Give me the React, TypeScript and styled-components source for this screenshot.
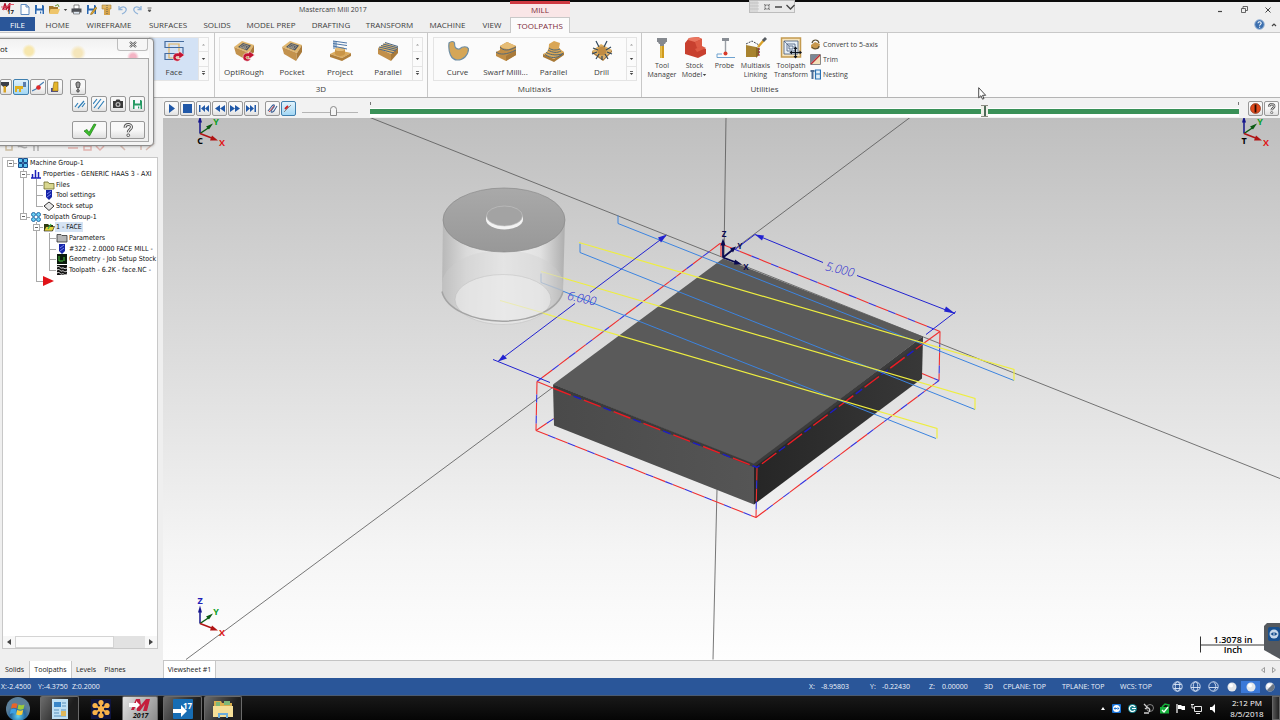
import React from "react";
import styled, { createGlobalStyle, ThemeProvider, css } from "styled-components";

const theme = {
  chrome: "#efefef",
  ribbon: "#fbfbfb",
  line: "#c8c8c8",
  blue: "#2a5699",
  text: "#3c3c3c",
  green: "#3a9158",
};

const GlobalStyle = createGlobalStyle`
  * { box-sizing: border-box; }
  html, body, #root { height: 100%; }
  body {
    margin: 0;
    overflow: hidden;
    font-family: "Open Sans", "Noto Sans", sans-serif;
    font-size: 8px;
    line-height: 10px;
    color: #3c3c3c;
  }
  button, input {
    font: inherit;
    color: inherit;
    margin: 0;
    padding: 0;
    border: 0;
    background: none;
  }
  svg { display: block; flex: none; }
`;

const Window = styled.div`
  position: relative;
  display: flex;
  flex-direction: column;
  height: 100vh;
  background: ${(p) => p.theme.chrome};
`;

/* ---------- title bar ---------- */

const TitleBar = styled.header`
  display: flex;
  height: 17px;
  flex: none;
  border-top: 2px solid #0c0c0c;
`;

const QuickAccess = styled.div`
  display: flex;
  align-items: center;
  width: 299px;
`;

const QuickButton = styled.button<{ $width?: number }>`
  display: flex;
  align-items: center;
  justify-content: center;
  width: ${(p) => p.$width ?? 14}px;
  height: 14px;
`;

const Title = styled.h1`
  margin: 0;
  width: 211px;
  font-size: 7px;
  font-weight: 400;
  line-height: 15px;
`;

const ContextTab = styled.div`
  width: 60px;
  margin-top: -1px;
  border-top: 3px solid #cf3840;
  background: #f9e6e7;
  color: #7d2a3a;
  line-height: 12px;
  text-align: center;
`;

const WindowButtons = styled.div`
  display: flex;
  align-items: center;
  gap: 12px;
  margin-left: auto;
  padding-right: 6px;
`;

const TabRow = styled.nav`
  display: flex;
  height: 15px;
  flex: none;
`;

const Tab = styled.button<{ $width: number; $kind?: "file" | "active" }>`
  width: ${(p) => p.$width}px;
  line-height: 15px;
  text-align: center;
  ${(p) =>
    p.$kind === "file" &&
    css`
      height: 14px;
      margin-right: 2px;
      background: ${p.theme.blue};
      color: #fff;
    `}
  ${(p) =>
    p.$kind === "active" &&
    css`
      height: 16px;
      border: 1px solid ${p.theme.line};
      border-bottom: 0;
      background: ${p.theme.ribbon};
      color: #7d2a3a;
      line-height: 13px;
      z-index: 1;
    `}
`;

const HelpCorner = styled.div`
  display: flex;
  align-items: center;
  gap: 6px;
  margin-left: auto;
  padding-right: 3px;
`;

/* ---------- ribbon ---------- */

const Ribbon = styled.section`
  display: flex;
  height: 66px;
  flex: none;
  border-top: 1px solid ${(p) => p.theme.line};
  border-bottom: 1px solid #b4b4b4;
  background: ${(p) => p.theme.ribbon};
`;

const Group = styled.div<{ $width: number }>`
  display: flex;
  flex-direction: column;
  align-items: center;
  justify-content: space-between;
  width: ${(p) => p.$width}px;
  padding: 4px 0 3px;
  border-right: 1px solid ${(p) => p.theme.line};
`;

const GroupLabel = styled.div`
  line-height: 10px;
`;

const Gallery = styled.div<{ $end?: boolean }>`
  display: flex;
  height: 44px;
  border: 1px solid #e4e4e4;
  margin-right: ${(p) => (p.$end ? 5 : 0)}px;
  align-self: ${(p) => (p.$end ? "flex-end" : "center")};
`;

const GalleryButton = styled.button<{ $selected?: boolean }>`
  display: flex;
  flex-direction: column;
  align-items: center;
  justify-content: space-between;
  width: 48px;
  padding: 2px 0 3px;
  white-space: nowrap;
  background: ${(p) => (p.$selected ? "#d3e2f5" : "transparent")};
`;

const Scroller = styled.div`
  display: flex;
  flex-direction: column;
  width: 10px;
  border-left: 1px solid #e4e4e4;
`;

const ScrollButton = styled.button`
  display: flex;
  flex: 1;
  align-items: center;
  justify-content: center;
  & + & { border-top: 1px solid #e4e4e4; }
`;

const Tools = styled.div`
  display: flex;
  align-items: flex-start;
  width: 100%;
  padding-left: 3px;
`;

const ToolButton = styled.button<{ $width: number }>`
  display: flex;
  flex-direction: column;
  align-items: center;
  gap: 2px;
  width: ${(p) => p.$width}px;
  font-size: 7px;
  line-height: 9px;
  white-space: nowrap;
`;

const ToolText = styled.span`
  display: flex;
  flex-direction: column;
  align-items: center;
`;

const MenuText = styled.span`
  display: flex;
  align-items: center;
`;

const SmallTools = styled.div`
  display: flex;
  flex-direction: column;
`;

const SmallTool = styled.button`
  display: flex;
  align-items: center;
  gap: 2px;
  height: 15px;
  font-size: 7px;
  white-space: nowrap;
`;

/* ---------- work area ---------- */

const Work = styled.main`
  display: flex;
  flex: 1;
  min-height: 0;
`;

const SidePanel = styled.aside`
  display: flex;
  flex-direction: column;
  width: 163px;
  flex: none;
`;

const PanelTools = styled.div`
  display: flex;
  align-items: flex-end;
  height: 59px;
  padding: 0 4px 5px;
  opacity: 0.6;
`;

const TreeBox = styled.div`
  display: flex;
  flex: 1;
  flex-direction: column;
  justify-content: space-between;
  margin: 0 5px 12px 2px;
  border: 1px solid ${(p) => p.theme.line};
  background: #fff;
  overflow: hidden;
`;

const Tree = styled.ul`
  display: grid;
  grid-auto-rows: 1fr;
  height: 128px;
  margin: 0;
  padding: 0 0 0 1px;
  list-style: none;
  font-family: "DejaVu Sans Condensed", "DejaVu Sans", sans-serif;
  font-size: 7px;
  color: #111;
`;

const TreeRow = styled.li`
  display: flex;
  align-items: center;
  white-space: nowrap;
`;

const TreeLabel = styled.span<{ $selected?: boolean }>`
  padding: 0 1px;
  line-height: 10px;
  background: ${(p) => (p.$selected ? "#d5e3f3" : "transparent")};
`;

const Guide = styled.span<{ $kind: string }>`
  position: relative;
  align-self: stretch;
  width: 13px;
  flex: none;
  &::before {
    content: "";
    position: absolute;
    left: 6px;
    top: 0;
    bottom: ${(p) => (p.$kind === "elbow" || p.$kind === "last" ? "50%" : "0")};
    border-left: ${(p) =>
      p.$kind === "blank" || p.$kind === "root" ? "0" : "1px solid #a9a9a9"};
  }
  &::after {
    content: "";
    position: absolute;
    left: 6px;
    right: 0;
    top: 50%;
    border-top: ${(p) =>
      p.$kind === "blank" || p.$kind === "line" ? "0" : "1px solid #a9a9a9"};
  }
`;

const Expander = styled.button`
  position: absolute;
  z-index: 1;
  left: 3px;
  top: 2px;
  width: 7px;
  height: 7px;
  border: 1px solid #aaa;
  background: linear-gradient(#666, #666) center / 3px 1px no-repeat #fff;
`;

const ScrollBar = styled.div`
  display: flex;
  height: 12px;
  background: #e2e2e2;
`;

const ScrollArrow = styled.button`
  display: flex;
  align-items: center;
  justify-content: center;
  width: 12px;
  background: #f7f7f7;
`;

const ScrollThumb = styled.div`
  width: 64%;
  margin-right: auto;
  border: 1px solid #d4d4d4;
  background: #fcfcfc;
`;

const BottomTabs = styled.nav`
  display: flex;
  height: 17px;
  flex: none;
  background: ${(p) => p.theme.chrome};
`;

const BottomTab = styled.button<{ $width: number; $active?: boolean }>`
  width: ${(p) => p.$width}px;
  font-size: 7px;
  line-height: 17px;
  color: #222;
  ${(p) =>
    p.$active &&
    css`
      border: 1px solid ${p.theme.line};
      border-width: 0 1px;
      background: #fff;
    `}
`;

const Stage = styled.section`
  display: flex;
  flex: 1;
  flex-direction: column;
  min-width: 0;
`;

const Viewport = styled.div`
  position: relative;
  flex: 1;
  min-height: 0;
  background: linear-gradient(#bfbfbf 0%, #d2d2d2 28%, #e4e4e4 55%, #f5f5f5 80%, #fefefe 100%);
  border-bottom: 1px solid #c4c4c4;
`;

const SheetArrows = styled.div`
  display: flex;
  align-items: center;
  gap: 7px;
  margin-left: auto;
  padding-right: 4px;
`;

const RemoteTab = styled.button`
  position: absolute;
  right: 0;
  bottom: 1px;
`;

/* ---------- playback ---------- */

const Playback = styled.div`
  display: flex;
  align-items: center;
  height: 20px;
  flex: none;
  padding: 0 1px;
  background: #f2f2f2;
`;

const PlayGroup = styled.div<{ $gap: number }>`
  display: flex;
  gap: 1px;
  margin-right: ${(p) => p.$gap}px;
`;

const PushButton = styled.button<{ $width?: number; $height?: number; $on?: boolean }>`
  display: flex;
  align-items: center;
  justify-content: center;
  width: ${(p) => p.$width ?? 15}px;
  height: ${(p) => p.$height ?? 15}px;
  border: 1px solid ${(p) => (p.$on ? "#3f7fae" : "#989898")};
  border-radius: 2px;
  background: ${(p) =>
    p.$on
      ? "linear-gradient(#e0f2fc, #a3d7f4)"
      : "linear-gradient(#f8f8f8 50%, #e0e0e0)"};
`;

const SpeedSlider = styled.input`
  appearance: none;
  width: 56px;
  height: 14px;
  margin-right: 12px;
  background: linear-gradient(#b5b5b5, #b5b5b5) 0 11px / 100% 1px no-repeat;
  &::-webkit-slider-thumb {
    appearance: none;
    width: 7px;
    height: 10px;
    margin-top: 6px;
    border: 1px solid #888;
    border-radius: 4px 4px 0 0;
    background: #f5f5f5;
  }
`;

const Timeline = styled.input`
  appearance: none;
  flex: 1;
  min-width: 0;
  height: 18px;
  margin-right: 9px;
  background:
    linear-gradient(#777, #777) 0 3px / 1px 3px no-repeat,
    linear-gradient(#777, #777) 100% 3px / 1px 3px no-repeat,
    linear-gradient(${(p) => p.theme.green}, ${(p) => p.theme.green}) 0 10px / 100% 5px no-repeat,
    linear-gradient(#fff, #fff) 0 9px / 100% 9px no-repeat;
  &::-webkit-slider-thumb {
    appearance: none;
    width: 7px;
    height: 12px;
    margin-top: 5px;
    border: 1px solid #8a8a80;
    border-width: 1px 0;
    background:
      linear-gradient(#4f6a58, #4f6a58) center / 2px 100% no-repeat,
      #f0f0e8;
  }
`;

/* ---------- dialog ---------- */

const Dialog = styled.div`
  position: absolute;
  z-index: 3;
  left: -6px;
  top: 38px;
  width: 160px;
  height: 108px;
  padding: 0 4px 4px 5px;
  border: 1px solid #8d8d8d;
  border-radius: 4px;
  background: #f4f4f4;
  box-shadow: 0 0 3px rgba(0, 0, 0, 0.4);
`;

const DialogTitle = styled.div`
  display: flex;
  justify-content: space-between;
  height: 19px;
  padding-right: 1px;
  line-height: 19px;
  color: #111;
  background:
    radial-gradient(circle at 29px 12px, #f7e7ae 0 4px, transparent 7px),
    radial-gradient(circle at 78px 14px, #f5e6bb 0 4px, transparent 8px),
    radial-gradient(circle at 133px 18px, #f4b4c4 0 3px, transparent 6px),
    linear-gradient(#f1f1f1, #fdfdfd);
`;

const CloseButton = styled.button`
  display: flex;
  align-items: center;
  justify-content: center;
  width: 31px;
  height: 12px;
  border: 1px solid #bdbdbd;
  border-top: 0;
  border-radius: 0 0 3px 3px;
  background: #f6f6f6;
`;

const DialogBody = styled.div`
  display: flex;
  flex-direction: column;
  height: 84px;
  border: 1px solid #a9a9a9;
  border-left: 0;
  background: #f0f0f0;
`;

const DialogRow = styled.div<{ $top: number; $gap: number; $right?: number }>`
  display: flex;
  gap: ${(p) => p.$gap}px;
  margin-top: ${(p) => p.$top}px;
  padding-right: ${(p) => p.$right ?? 0}px;
  justify-content: ${(p) => (p.$right ? "flex-end" : "flex-start")};
`;

const Spacer = styled.span`
  width: 5px;
`;

/* ---------- status + taskbar ---------- */

const StatusBar = styled.footer`
  display: flex;
  height: 17px;
  flex: none;
  align-items: center;
  justify-content: space-between;
  padding: 0 1px;
  background: ${(p) => p.theme.blue};
  color: #eef3fb;
  font-size: 7px;
  white-space: pre;
`;

const StatusGroup = styled.div`
  display: flex;
  align-items: center;
  height: 100%;
`;

const StatusCell = styled.span<{ $width: number }>`
  width: ${(p) => p.$width}px;
`;

const ShadeButton = styled.button<{ $on?: boolean; $narrow?: boolean }>`
  display: flex;
  align-items: center;
  justify-content: center;
  width: ${(p) => (p.$narrow ? 18 : 19)}px;
  height: 12px;
  background: ${(p) => (p.$on ? "#3a78d8" : "transparent")};
`;

const Taskbar = styled.footer`
  display: flex;
  height: 25px;
  flex: none;
  border-top: 1px solid #4a5a70;
  background: linear-gradient(#191919, #050505);
  color: #fff;
`;

const StartButton = styled.button`
  width: 36px;
  margin-right: 4px;
  padding-left: 5px;
`;

const TaskButton = styled.button<{ $width: number; $look?: "plain" | "active"; $gap?: number }>`
  display: flex;
  align-items: center;
  justify-content: center;
  width: ${(p) => p.$width}px;
  margin-right: ${(p) => p.$gap ?? 1}px;
  border: 1px solid ${(p) => (p.$look === "plain" ? "transparent" : "#6a6a6a")};
  border-bottom: 0;
  border-radius: 2px 2px 0 0;
  background: ${(p) =>
    p.$look === "plain"
      ? "transparent"
      : p.$look === "active"
        ? "linear-gradient(120deg, #e2e2e2, #8b8b8b)"
        : "linear-gradient(120deg, #6c6c6c, #1e1e1e 70%)"};
`;

const Tray = styled.div`
  display: flex;
  align-items: center;
  gap: 5px;
  margin-left: auto;
`;

const Clock = styled.div`
  width: 44px;
  padding-left: 4px;
  line-height: 11px;
  text-align: center;
`;

const ShowDesktop = styled.button`
  width: 8px;
  height: 100%;
  border: 1px solid #666;
  background: linear-gradient(90deg, #555, #222);
`;

const FloatBar = styled.div`
  position: absolute;
  z-index: 4;
  left: 749px;
  top: 0;
  display: flex;
  align-items: center;
  gap: 4px;
  width: 46px;
  height: 13px;
  border: 1px solid #bdbdbd;
  background: #e9e9e9;
`;

const Pointer = styled.svg`
  position: absolute;
  z-index: 5;
  left: 978px;
  top: 87px;
`;

/* ---------- small glyphs ---------- */

const Caret = ({ up, bar, light }: { up?: boolean; bar?: boolean; light?: boolean }) => (
  <svg width="5" height="5" viewBox="0 0 5 5">
    {bar && <path d="M1 .5h3" stroke="#444" strokeWidth=".8" />}
    <path d={up ? "M1 3.5L2.5 2 4 3.5z" : "M.8 2L2.5 4 4.2 2z"} fill={light ? "#999" : "#444"} />
  </svg>
);

const AppLogo = () => (
  <svg width="16" height="13" viewBox="0 0 16 13">
    <path d="M2 7L4 1.500l1.500 4 3-4L8 7" fill="none" stroke="#b3122c" strokeWidth="2" />
    <path d="M0 4h6l3-2.500h4M1 6.500h4" stroke="#e3566b" strokeWidth="1" fill="none" />
    <text x="6" y="11" fontSize="6" fontWeight="700" fill="#111">17</text>
  </svg>
);

const NewIcon = () => (
  <svg width="10" height="11" viewBox="0 0 10 11">
    <path d="M1 .5h5L9 3v7.500H1z" fill="#fdfdfd" stroke="#5c88bd" />
    <path d="M6 .5V3h3" fill="none" stroke="#5c88bd" />
  </svg>
);

const SaveIcon = ({ edit, color = "#2b67b0" }: { edit?: boolean; color?: string }) => (
  <svg width="11" height="11" viewBox="0 0 11 11">
    <path d="M1 1h8l1 1v8H1z" fill={color} />
    <path d="M3 1h5v3.500H3zM2.500 6.500h6V10h-6z" fill="#f3f7fb" />
    <path d="M6 7.500h1.200V9.500H6z" fill={color} />
    {edit && <path d="M5 9l4.500-6 1.500 1-4.500 6-2 .7z" fill="#e3a82c" stroke="#7a5a1a" strokeWidth=".5" />}
  </svg>
);

const OpenIcon = () => (
  <svg width="12" height="11" viewBox="0 0 12 11">
    <path d="M1 2h4l1 1h4v6H1z" fill="#a57a2b" />
    <path d="M2.500 5H12l-2 5H1z" fill="#eec56b" />
    <path d="M7 2l3-1.500 1 2.500" fill="none" stroke="#6c9a3a" />
  </svg>
);

const PrintIcon = () => (
  <svg width="11" height="11" viewBox="0 0 11 11">
    <path d="M3 1h5v4H3z" fill="#fff" stroke="#555" strokeWidth=".7" />
    <path d="M.5 4.500h10V8.500H.5z" fill="#4c4f55" />
    <path d="M2.500 7.500h6v2.500h-6z" fill="#dfe8f2" stroke="#555" strokeWidth=".6" />
  </svg>
);

const ZipIcon = () => (
  <svg width="11" height="12" viewBox="0 0 11 12">
    <path d="M1 1h9v4H1z" fill="#e2b765" stroke="#a57f38" strokeWidth=".6" />
    <path d="M3 4h6v7H3z" fill="#d6a44d" />
    <path d="M6 1v10" stroke="#69604d" strokeDasharray="1 1" />
  </svg>
);

const TurnIcon = ({ redo }: { redo?: boolean }) => (
  <svg width="10" height="10" viewBox="0 0 10 10">
    <g transform={redo ? "translate(10 0) scale(-1 1)" : undefined} fill="none" stroke="#8fb2d8" strokeWidth="1.300">
      <path d="M1 1v3.500h3.500M1.300 4C3 1.500 7.500 1 8.200 4 8.600 6 6 8 4 9" />
    </g>
  </svg>
);

const QuickCaret = () => (
  <svg width="5" height="6" viewBox="0 0 5 6">
    <path d="M.5 1h4M1 3l1.500 2L4 3z" stroke="#555" fill="#555" strokeWidth=".8" />
  </svg>
);

/* ---------- ribbon icons ---------- */

const RedBadge = () => (
  <g>
    <path
      d="M10 17.500c0-3 1.500-4.500 4.500-4.500h1.500v-2l5.500 4-5.500 4v-2.500h-1.500c-1.500 0-1.800.5-1.500 1.500.5 1 2.500 1.500 5 .5-1 2.500-3 3-5 2.500-2-.5-3-1.500-3-3.500z"
      fill="#c31432"
      stroke="#fff"
      strokeWidth=".5"
    />
  </g>
);

const Slab = () => (
  <g>
    <path d="M1 8l7-5 13 4-7 7z" fill="#e0b468" />
    <path d="M1 8l13 6v7L1 14z" fill="#c28f49" />
    <path d="M14 14l7-7v6l-7 8z" fill="#a97a3a" />
  </g>
);

const RibbonIcon = ({ kind }: { kind: string }) => (
  <svg width="22" height="22" viewBox="0 0 22 22">
    {kind === "face" && (
      <>
        <path d="M6 4h10v14H6z" fill="none" stroke="#e4b45e" strokeWidth="1.200" />
        <path d="M21 1.500H2v6h18v6H2v6h10" fill="none" stroke="#456c9e" strokeWidth="1.200" />
        <RedBadge />
      </>
    )}
    {(kind === "optirough" || kind === "pocket") && (
      <>
        <path d="M1 7l8-6 12 4-5 8z" fill="#e0b76f" />
        <path d="M1 7l15 6-1 8L3 14z" fill="#c3924d" />
        <path d="M16 13l5-8v7l-6 9z" fill="#a97a3a" />
        <path d="M5 7l5-4 8 2.500-4 5z" fill="#4d5560" />
        <path d="M7 7l3.500-2.500 5 1.500-2.500 3zM9.500 7l1.500-1 2 .8-1 1.200z" fill="none" stroke="#b7ae9a" strokeWidth=".7" />
        {kind === "optirough" && <RedBadge />}
      </>
    )}
    {kind === "project" && (
      <>
        <path d="M1 14l8-4 13 3-9 5z" fill="#dbab5c" />
        <path d="M1 14l12 4v3L1 17zM13 18l9-5v3l-9 5z" fill="#b07f3b" />
        <path d="M6 9v5c2 2.500 8 2.500 10 0V9z" fill="#c99548" />
        <ellipse cx="11" cy="9" rx="5" ry="2" fill="#e4bc77" />
        <path d="M4 1l14 2M4 3.500l14 2M4 6l14 3M5 1v8M7 1v7" fill="none" stroke="#4d76a6" strokeWidth="1" />
      </>
    )}
    {kind === "parallel" && (
      <>
        <Slab />
        <path d="M2 7l17 4M4 5.500l16 4M6 4l15 4M8 2.500l13 4M2 9l15 4" stroke="#4b6786" strokeWidth="1" />
      </>
    )}
    {kind === "curve" && (
      <path
        d="M2 3c2-2 5-2 5.500 0 0 4 1 6.500 5 6 3-3 8-3 9 0 0 6-5 11-11 11C4 20 1 12 2 3z"
        fill="#d5a657"
        stroke="#6e8ea5"
        strokeWidth="1.200"
      />
    )}
    {kind === "swarf" && (
      <>
        <path d="M1 12l4-2V6l7-4 9 4v9l-10 6-10-5z" fill="#c28e45" />
        <path d="M5 6l7-4 9 4-7 3c-3 .5-7-1-9-3z" fill="#e6bd76" />
        <path d="M11 16l10-6v5l-10 6z" fill="#a97a3a" />
        <path d="M5 7c3 4 9 4 16 0M1 12c4 3 10 3 20-2" fill="none" stroke="#566a78" strokeWidth="1" />
      </>
    )}
    {kind === "surface" && (
      <>
        <path d="M0 14l6-3 15 1-10 7z" fill="#dcab5a" />
        <path d="M0 14l11 5v3L0 17zM11 19l10-7v3l-10 7z" fill="#a87936" />
        <path d="M6 4l5-3 6 2-1 5c2 2 4 3 5 4l-9 5-9-4c2-2 3-5 3-9z" fill="#d9a655" />
        <path d="M6 8c4 3 8 2 11 1M5 10c5 3 9 3 13 1M3 12.500c6 3 12 3 17 1M2 14.500c6 4 11 4 17 0" fill="none" stroke="#4d6676" strokeWidth="1" />
      </>
    )}
    {kind === "drill" && (
      <>
        <path d="M1 11l9-7 11 6-9 9z" fill="#deb063" />
        <path d="M1 11l11 8v2L1 13zM12 19l9-9v2l-9 9z" fill="#a97a38" />
        <circle cx="11" cy="11" r="4.500" fill="#c08c43" />
        <path d="M5 1l3 6M16 1l-3 6M2 8l5 2M20 7l-5 3M5 19l3-5M17 19l-3-5M11 16v4M1 14l5-2M21 14l-5-2" stroke="#30485e" strokeWidth="1.200" />
      </>
    )}
    {kind === "tool" && (
      <>
        <path d="M6 1h10v4h-1l-1 2h-1v3H9V7H8L7 5H6z" fill="#85898f" />
        <path d="M9 9h4v12H9z" fill="#cf9a1e" />
        <path d="M9.500 9h1.200v12H9.500z" fill="#f0ce62" />
      </>
    )}
    {kind === "stock" && (
      <>
        <path d="M1 6l4-5 9-1 4 2v8l4 2v5l-8 4L1 17z" fill="#c8402f" />
        <path d="M5 1l9-1 4 2-7 3-7-2z" fill="#ea7660" />
        <path d="M11 5l7-3v7l-5 2zM11 12l7-3 4 2-9 4z" fill="#de5a44" />
      </>
    )}
    {kind === "probe" && (
      <>
        <path d="M8 1h7v3H8z" fill="#888d94" />
        <path d="M10.800 4h1.400v11h-1.400z" fill="#9a9fa5" />
        <circle cx="11.500" cy="16.500" r="2" fill="#d93a28" />
        <path d="M8 17H3v3.500h18" stroke="#6ea2cf" fill="none" />
      </>
    )}
    {kind === "linking" && (
      <>
        <path d="M1 8l10 2v10H1z" fill="#a8832f" />
        <path d="M11 10l3 1v7l-3 3z" fill="#8a6a24" />
        <path d="M1 7l6-3 7 4v9" fill="none" stroke="#3f4650" strokeDasharray="2 1" />
        <path d="M14 8v12" stroke="#b02a48" strokeDasharray="2 1" />
        <path d="M13 10l6-7" stroke="#dba32a" strokeWidth="2.400" />
        <path d="M17 3l3-3 2 2-3 3z" fill="#555b61" />
      </>
    )}
    {kind === "transform" && (
      <>
        <path d="M1.500 1h19v19h-19z" fill="#f4e3bd" stroke="#c49a4f" strokeWidth="1.500" />
        <path d="M4 4h14v13H4zM7 7h8v7H7zM9 9h4v3H9z" fill="#e8f0f8" stroke="#44597a" strokeWidth=".8" />
        <path d="M4 4l5 5" stroke="#44597a" strokeWidth=".7" />
        <path d="M15.500 10v11M10 15.500h11" stroke="#10151e" strokeWidth="1.200" />
        <path d="M13.500 12l2-2.500 2 2.500zM13.500 19l2 2.500 2-2.500zM12 13.500l-2.500 2 2.500 2zM19.500 13.500l2.500 2-2.500 2z" fill="#10151e" />
      </>
    )}
  </svg>
);

const SmallIcon = ({ kind }: { kind: string }) => (
  <svg width="11" height="11" viewBox="0 0 11 11">
    {kind === "convert" && (
      <>
        <path d="M1 6l4-3 5 2-1 4-5 1.500L1 9z" fill="#c8984c" />
        <path d="M2 4c1-4 6-4 7 0M9 7c0 3-5 4-7 1" fill="none" stroke="#5c5034" strokeWidth="1.200" />
      </>
    )}
    {kind === "trim" && (
      <>
        <path d="M.5.5h10v10H.5z" fill="#f3dfb8" stroke="#888" />
        <path d="M1 1h8L1 9z" fill="#7a8795" />
        <path d="M1 10l9-9" stroke="#b92d38" strokeWidth="1.500" />
      </>
    )}
    {kind === "nest" && (
      <>
        <path d="M.5 1h4v2h-1v7h-2V3h-1z" fill="#4b6d95" />
        <path d="M5.500 1h5v9h-5zM5.500 5h5M5.500 5V1" fill="#e2f0fa" stroke="#2a72b3" strokeWidth="1.200" />
      </>
    )}
  </svg>
);

/* ---------- tree icons ---------- */

const TreeIcon = ({ kind }: { kind: string }) => (
  <svg width="12" height="10" viewBox="0 0 12 10">
    {kind === "machine" && (
      <path d="M1.500.5h4v4h-4zM6.500.5h4v4h-4zM1.500 5.500h4v4h-4zM6.500 5.500h4v4h-4z" fill="#5cc3ee" stroke="#1a4c8c" />
    )}
    {kind === "props" && <path d="M2.500 9V5M5.500 9V1M8.500 9V3M1 9h10" stroke="#1a1fb8" strokeWidth="1.500" />}
    {kind === "files" && <path d="M1 2h4l1 1.500h5V9H1z" fill="#d9d78f" stroke="#6c6b2c" strokeWidth=".8" />}
    {kind === "folder" && <path d="M1 1.500h4l1 1h5V9H1z" fill="#b5b5b5" stroke="#333" strokeWidth=".8" />}
    {kind === "tool" && (
      <>
        <path d="M3 0h6v7L6 10 3 7z" fill="#1725a8" />
        <path d="M4 4l4-3M4 7l4-3" stroke="#8fa0ff" strokeWidth=".8" />
      </>
    )}
    {kind === "stock" && <path d="M1 5l5-4 5 4-5 4.500z" fill="#e6e6e6" stroke="#222" strokeWidth=".9" />}
    {kind === "group" && (
      <g fill="#6bd0f3" stroke="#1a5ea0" strokeWidth=".9">
        <circle cx="3.500" cy="2.500" r="2" />
        <circle cx="8.500" cy="2.500" r="2" />
        <circle cx="3.500" cy="7.500" r="2" />
        <circle cx="8.500" cy="7.500" r="2" />
      </g>
    )}
    {kind === "face" && (
      <>
        <path d="M1 2h4l1 1h4v6H1z" fill="#2d3d12" />
        <path d="M3 4.500h8.500L9.500 9H1z" fill="#e2d23c" stroke="#111" strokeWidth=".6" />
        <path d="M5 7l3-5" stroke="#3cb44a" strokeWidth="1.300" />
      </>
    )}
    {kind === "geometry" && (
      <>
        <path d="M1 0h10v10H1z" fill="#0b1a0d" />
        <path d="M3 2v5h4M8 3v4" stroke="#49c43c" fill="none" />
      </>
    )}
    {kind === "nc" && (
      <>
        <path d="M1 0h10v10H1z" fill="#111" />
        <path d="M1 2c3-2 3 2 5 1s2 2 5 0M1 5c3-2 3 2 5 1s2 2 5 0M1 8c3-2 3 2 5 1s2 2 5 0" stroke="#fff" fill="none" strokeWidth=".9" />
      </>
    )}
    {kind === "insert" && <path d="M0 0l11 5-11 5z" fill="#e01318" />}
  </svg>
);

/* ---------- player icons ---------- */

const PLAYER_PATHS: Record<string, string> = {
  Play: "M3 1l6 4.500L3 10z",
  Stop: "M1 1h9v9H1z",
  Start: "M1 2h1.500v7H1zM7 2v7L3 5.500zM11 2v7L7 5.500z",
  Back: "M6 2v7L1 5.500zM11 2v7L6 5.500z",
  Forward: "M0 2v7l5-3.500zM5 2v7l5-3.500z",
  End: "M0 2v7l4-3.500zM4 2v7l4-3.500zM8.500 2H10v7H8.500z",
};

const PlayerIcon = ({ kind }: { kind: string }) => (
  <svg width="11" height="11" viewBox="0 0 11 11">
    <path d={PLAYER_PATHS[kind]} fill="#2058a8" />
  </svg>
);

const QuestionIcon = ({ size = 11 }: { size?: number }) => (
  <svg width={size} height={size} viewBox="0 0 12 12">
    <path d="M3.500 4c0-3.500 5.500-3.500 5.500-.5C9 5.500 6.200 5.500 6.200 8" fill="none" stroke="#555" strokeWidth="2.600" />
    <path d="M3.500 4c0-3.500 5.500-3.500 5.500-.5C9 5.500 6.200 5.500 6.200 8" fill="none" stroke="#eee" strokeWidth="1" />
    <circle cx="6.200" cy="10.500" r="1.200" fill="#eee" stroke="#555" strokeWidth=".8" />
  </svg>
);

const DialogIcon = ({ kind }: { kind: string }) => (
  <svg width="12" height="12" viewBox="0 0 12 12">
    {kind === "Tool" && (
      <>
        <path d="M1 1h8v3L6.500 6h-3L1 4z" fill="#3c4048" />
        <path d="M3.500 5H6v6.500H3.500z" fill="#d8a323" />
      </>
    )}
    {kind === "Holder" && (
      <>
        <path d="M0 5h8v3H6v3H4V8H2v3H0z" fill="#dfb021" />
        <path d="M8 1h3v5H8z" fill="#5a7fae" />
      </>
    )}
    {kind === "Point" && (
      <>
        <path d="M0 10l4-2 4-4 4-3" stroke="#4c80b4" strokeWidth="1.300" fill="none" />
        <circle cx="6.500" cy="6.500" r="2.300" fill="#df2b2b" />
      </>
    )}
    {kind === "Stock" && (
      <>
        <path d="M2 7h7v4H2z" fill="#4a4a90" />
        <path d="M5 1h4v9H3.500z" fill="#e5b52b" stroke="#8a6a10" strokeWidth=".6" />
      </>
    )}
    {kind === "Options" && (
      <>
        <path d="M6 1c2.500 0 2.500 2 1 6H5C3.500 3 3.500 1 6 1z" fill="#9a9a9a" stroke="#333" strokeWidth=".9" />
        <circle cx="6" cy="9.800" r="1.300" fill="#9a9a9a" stroke="#333" strokeWidth=".8" />
      </>
    )}
    {kind === "Trace" && <path d="M1 9l3-4M4 10l6-7M8 9l3-4" stroke="#2f7fb8" strokeWidth="1.200" />}
    {kind === "Hatch" && <path d="M0 6l4-5M1 10L8 1M5 11l6-8" stroke="#2f7fb8" strokeWidth="1.200" />}
    {kind === "Snapshot" && (
      <>
        <path d="M1 3h2.500l1-1.500h3L8.500 3H11v7H1z" fill="#3a3a3a" />
        <circle cx="6" cy="6.500" r="2.500" fill="#bbb" />
        <circle cx="6" cy="6.500" r="1.200" fill="#333" />
      </>
    )}
  </svg>
);

/* ---------- 3D scene ---------- */

const Gnomon = ({ x, y, letter, zTop }: { x: number; y: number; letter?: string; zTop?: boolean }) => (
  <g transform={`translate(${x} ${y})`} fontSize="9" fontWeight="700" textAnchor="middle">
    <path d="M0 0V-12" stroke="#14148c" strokeWidth="1.500" />
    <path d="M-2-11L0-18 2-11z" fill="#14148c" />
    <path d="M0 0L9-6" stroke="#0b5b12" strokeWidth="1.500" />
    <path d="M6-7L13-10 9-4z" fill="#0b5b12" />
    <path d="M0 0L13 5" stroke="#b01414" strokeWidth="1.500" />
    <path d="M12 2L18 7 10 7z" fill="#b01414" />
    <text x="16" y="-9" fill="#0aa01c">Y</text>
    <text x="22" y="12" fill="#e01818">X</text>
    {zTop && <text x="0" y="-20" fill="#2020b8">Z</text>}
    {letter && <text x="0" y="10" fill="#000">{letter}</text>}
  </g>
);

const EDGES = [
  "M720 244L940 332",
  "M720 244L537 382",
  "M940 332L939 381",
  "M537 382L536 431",
  "M536 431L756 518",
  "M756 518L939 381",
  "M757 468L756 518",
  "M721 244V257",
  "M536 431L554 419",
  "M922 374L939 381",
];

const Scene = () => (
  <svg
    width="100%"
    height="100%"
    viewBox="163 118 1117 543"
    preserveAspectRatio="xMidYMid slice"
    fontFamily="'Open Sans', sans-serif"
  >
    <defs>
      <linearGradient id="wall">
        <stop offset="0" stopColor="#b4b4b4" />
        <stop offset=".2" stopColor="#dcdcdc" />
        <stop offset=".5" stopColor="#f6f6f6" />
        <stop offset=".8" stopColor="#e4e4e4" />
        <stop offset="1" stopColor="#a8a8a8" />
      </linearGradient>
      <linearGradient id="lid" x2="0" y2="1">
        <stop offset="0" stopColor="#a9a9a9" />
        <stop offset="1" stopColor="#989898" />
      </linearGradient>
      <linearGradient id="side">
        <stop offset="0" stopColor="#4a4a4a" />
        <stop offset="1" stopColor="#555" />
      </linearGradient>
      <linearGradient id="sideDark">
        <stop offset="0" stopColor="#262626" />
        <stop offset="1" stopColor="#383838" />
      </linearGradient>
    </defs>

    <g stroke="#555" strokeWidth=".8" fill="none">
      <path d="M370 118L723 258L1280 479" />
      <path d="M910 118L723 258" />
      <path d="M726 118L724 258" />
      <path d="M554 387L186 660" />
      <path d="M717 490L713 660" />
    </g>

    <path d="M723 259L923 337L754 465L553 385z" fill="#5a5a5a" />
    <path d="M553 385L754 465V505L554 426z" fill="url(#side)" />
    <path d="M754 465L923 337L922 379L754 505z" fill="url(#sideDark)" />
    <path d="M554 387L754 466L922 340" fill="none" stroke="#3b3b3b" strokeWidth="3" />

    <g fill="none" strokeWidth="1.100">
      {EDGES.map((d) => (
        <React.Fragment key={d}>
          <path d={d} stroke="#f03030" strokeDasharray="13 8" />
          <path d={d} stroke="#3434e0" strokeDasharray="8 13" strokeDashoffset="-13" />
        </React.Fragment>
      ))}
      <path d="M554 389L757 468L922 345" stroke="#ee1c24" strokeWidth="1.400" strokeDasharray="18 14" />
      <path d="M554 389L757 468L922 345" stroke="#1c1cc8" strokeWidth="1.400" strokeDasharray="8 24" strokeDashoffset="-21" />
      <path d="M537 382L554 389M922 345L940 332" stroke="#f03030" />
    </g>

    <g fill="none" stroke="#3c84e0" strokeWidth="1">
      <path d="M618 216V224L1014 381" />
      <path d="M580 244V253L975 410" />
      <path d="M541 274V283L936 439" />
    </g>
    <g fill="none" stroke="#eeee40" strokeWidth="1.200">
      <path d="M579 243L1014 370V381" />
      <path d="M541 272L975 399V410" />
      <path d="M500 301L937 429V439" />
    </g>

    <g fill="none" stroke="#2222d0" strokeWidth="1">
      <path d="M755 235L823 263M857 276L955 314M735 250L755 235M926 335L956 312" />
      <path d="M666 236L590 293M575 304L498 362M493 360L550 383" />
    </g>
    <g fill="#2222d0">
      <path d="M755 235L764 236 762 241z" />
      <path d="M955 314L944 312 946 307z" />
      <path d="M667 235L658 238 661 243z" />
      <path d="M498 362L503 355 507 359z" />
    </g>
    <g fontSize="12" fontStyle="italic" fontWeight="300" fill="#2222d0" textAnchor="middle">
      <text transform="translate(839 274) rotate(14)">5.000</text>
      <text transform="translate(581 303) rotate(12)">6.000</text>
    </g>

    <g>
      <path d="M443 220L442 292A61 34 0 0 0 563 292L565 220z" fill="url(#wall)" opacity=".85" />
      <path d="M442 285A60 34 0 0 1 563 285V292A61 34 0 0 1 442 292z" fill="#cfcfcf" opacity=".35" />
      <ellipse cx="503" cy="300" rx="48" ry="25" fill="#ececec" opacity=".6" stroke="#bbb" strokeWidth=".7" />
      <path d="M442 292A61 34 0 0 0 563 292" fill="none" stroke="#a4a4a4" strokeWidth="1.500" />
      <ellipse cx="504" cy="220.500" rx="61" ry="32" fill="url(#lid)" stroke="#8a8a8a" strokeWidth=".7" />
      <path d="M486 217v3a18.500 10 0 0 0 37 0v-3z" fill="#f3f3f3" />
      <ellipse cx="504.500" cy="216.500" rx="18" ry="10" fill="#a3a3a3" stroke="#c4c4c4" strokeWidth=".6" />
      <path d="M500 301L563 319M541 272L565 279" stroke="#eeee90" strokeWidth=".8" opacity=".7" />
      <path d="M541 274V283L563 291" stroke="#9fb4cc" strokeWidth=".8" fill="none" opacity=".7" />
    </g>

    <g transform="translate(723 258)" fontSize="8" fontWeight="700" fill="#0a0a50" textAnchor="middle">
      <path d="M0 0V-15M0 0L10-8M0 0L16 6" stroke="#0a0a50" strokeWidth="1.800" />
      <path d="M-2.500-12L0-19 2.500-12zM7-9L13-11 10-5zM12 2L19 7 11 7z" />
      <text x="1" y="-21">Z</text>
      <text x="17" y="-9">Y</text>
      <text x="23" y="12">X</text>
    </g>

    <Gnomon x={200} y={134} letter="C" />
    <Gnomon x={1244} y={134} letter="T" />
    <Gnomon x={200} y={624} zTop />

    <path d="M1200.500 637V653M1200 645.500H1265" stroke="#333" fill="none" />
    <g fontSize="9" fontWeight="600" fill="#000" textAnchor="middle">
      <text x="1233" y="643">1.3078 in</text>
      <text x="1233" y="653">Inch</text>
    </g>
  </svg>
);

/* ---------- data ---------- */

const TABS: [string, number][] = [
  ["HOME", 41],
  ["WIREFRAME", 62],
  ["SURFACES", 56],
  ["SOLIDS", 42],
  ["MODEL PREP", 66],
  ["DRAFTING", 54],
  ["TRANSFORM", 63],
  ["MACHINE", 53],
  ["VIEW", 36],
];

const GALLERIES = [
  {
    label: "3D",
    width: 213,
    items: [["OptiRough", "optirough"], ["Pocket", "pocket"], ["Project", "project"], ["Parallel", "parallel"]],
  },
  {
    label: "Multiaxis",
    width: 214,
    items: [["Curve", "curve"], ["Swarf Milli...", "swarf"], ["Parallel", "surface"], ["Drill", "drill"]],
  },
];

const TOOLS: { top: string; bottom?: string; icon: string; width: number; menu?: boolean }[] = [
  { top: "Tool", bottom: "Manager", icon: "tool", width: 34 },
  { top: "Stock", bottom: "Model", icon: "stock", width: 31, menu: true },
  { top: "Probe", icon: "probe", width: 29 },
  { top: "Multiaxis", bottom: "Linking", icon: "linking", width: 33 },
  { top: "Toolpath", bottom: "Transform", icon: "transform", width: 38 },
];

const TREE: { guides: string[]; icon: string; label: string; selected?: boolean }[] = [
  { guides: ["root"], icon: "machine", label: "Machine Group-1" },
  { guides: ["blank", "open"], icon: "props", label: "Properties - GENERIC HAAS 3 - AXI" },
  { guides: ["blank", "line", "tee"], icon: "files", label: "Files" },
  { guides: ["blank", "line", "tee"], icon: "tool", label: "Tool settings" },
  { guides: ["blank", "line", "elbow"], icon: "stock", label: "Stock setup" },
  { guides: ["blank", "last"], icon: "group", label: "Toolpath Group-1" },
  { guides: ["blank", "blank", "open"], icon: "face", label: "1 - FACE", selected: true },
  { guides: ["blank", "blank", "line", "tee"], icon: "folder", label: "Parameters" },
  { guides: ["blank", "blank", "line", "tee"], icon: "tool", label: "#322 - 2.0000 FACE MILL -" },
  { guides: ["blank", "blank", "line", "tee"], icon: "geometry", label: "Geometry - Job Setup Stock" },
  { guides: ["blank", "blank", "line", "elbow"], icon: "nc", label: "Toolpath - 6.2K - face.NC -" },
  { guides: ["blank", "blank", "elbow"], icon: "insert", label: "" },
];

const EXPANDABLE = ["root", "open", "last"];

const GalleryScroller = () => (
  <Scroller>
    <ScrollButton aria-label="Previous"><Caret up light /></ScrollButton>
    <ScrollButton aria-label="Next"><Caret /></ScrollButton>
    <ScrollButton aria-label="More"><Caret bar /></ScrollButton>
  </Scroller>
);

const Globe = ({ full }: { full: number }) => (
  <svg width="11" height="11" viewBox="0 0 11 11" fill="none" stroke="#dbe7f7" strokeWidth=".9">
    <circle cx="5.500" cy="5.500" r="4.700" />
    {full > 0 ? (
      <ellipse cx="5.500" cy="5.500" rx="2.200" ry="4.700" />
    ) : (
      <path d="M5.500 1c3 2 3 7 0 9" />
    )}
    <path d={full > 1 ? "M1.500 3.500h8M1.500 7.500h8" : "M1 6.500h9"} />
  </svg>
);

const Ball = ({ half }: { half?: boolean }) => (
  <svg width="10" height="10" viewBox="0 0 10 10">
    <circle cx="5" cy="5" r="4.500" fill="#e3e6ea" />
    <circle cx="4" cy="3.500" r="2" fill="#fff" />
    {half && <path d="M8.200 1.800A4.500 4.500 0 0 1 1.800 8.200z" fill="#6b7684" />}
  </svg>
);

const TrayIcons = () => (
  <>
    <svg width="6" height="5" viewBox="0 0 6 5"><path d="M1 4l2-3 2 3z" fill="#fff" /></svg>
    <svg width="11" height="11" viewBox="0 0 11 11">
      <rect x="1" y="1" width="9" height="9" rx="1" fill="#1b74d8" />
      <circle cx="5.500" cy="5.500" r="3.500" fill="#fff" />
      <path d="M2.500 5.500l2-1.500v3zM8.500 5.500l-2-1.500v3zM4 5h3v1H4z" fill="#1b74d8" />
    </svg>
    <svg width="11" height="11" viewBox="0 0 11 11">
      <circle cx="5.500" cy="5.500" r="4.500" fill="#15808c" />
      <path d="M8 4a3 3 0 1 0 0 3M5 5.500h4" fill="none" stroke="#fff" strokeWidth="1.200" />
    </svg>
    <svg width="11" height="11" viewBox="0 0 11 11" fill="none" stroke="#cfcfcf">
      <path d="M1 1l4 4M2 6c3-3 6 0 4 3M1 10h5" strokeWidth="1.300" />
      <circle cx="7" cy="5" r="3.500" strokeWidth=".6" />
    </svg>
    <svg width="11" height="11" viewBox="0 0 11 11">
      <path d="M1 4h9v6.500H1z" fill="#16b13c" />
      <path d="M3 4l3-3 4 1-1 3" fill="none" stroke="#16b13c" strokeWidth="1.500" />
      <path d="M3 7l2 2 4-5" fill="none" stroke="#fff" strokeWidth="1.300" />
    </svg>
    <svg width="11" height="11" viewBox="0 0 11 11">
      <path d="M2 1v9" stroke="#fff" strokeWidth="1.200" />
      <path d="M3 2h3l1 1h3v4H7L6 6H3z" fill="#fff" />
    </svg>
    <svg width="11" height="11" viewBox="0 0 11 11" fill="none" stroke="#e6e6e6">
      <path d="M3.500 3.500h7v5h-7zM5 10.500h4M1 1v4h2M0 1.500h3" />
    </svg>
    <svg width="11" height="11" viewBox="0 0 11 11"><path d="M3 4h2l3-3v9L5 7H3z" fill="#fff" /></svg>
  </>
);

export default function App() {
  return (
    <ThemeProvider theme={theme}>
      <GlobalStyle />
      <Window>
        <TitleBar>
          <QuickAccess>
            <QuickButton $width={18} aria-label="Mastercam"><AppLogo /></QuickButton>
            <QuickButton aria-label="New"><NewIcon /></QuickButton>
            <QuickButton aria-label="Save"><SaveIcon /></QuickButton>
            <QuickButton $width={16} aria-label="Open"><OpenIcon /></QuickButton>
            <QuickButton $width={6} aria-label="Recent files"><Caret /></QuickButton>
            <QuickButton $width={16} aria-label="Print"><PrintIcon /></QuickButton>
            <QuickButton aria-label="Save as"><SaveIcon edit /></QuickButton>
            <QuickButton $width={17} aria-label="Zip to go"><ZipIcon /></QuickButton>
            <QuickButton $width={16} aria-label="Undo"><TurnIcon /></QuickButton>
            <QuickButton $width={12} aria-label="Redo"><TurnIcon redo /></QuickButton>
            <QuickButton $width={12} aria-label="Customize"><QuickCaret /></QuickButton>
          </QuickAccess>
          <Title>Mastercam Mill 2017</Title>
          <ContextTab>MILL</ContextTab>
          <WindowButtons>
            <QuickButton $width={12} aria-label="Minimize">
              <svg width="6" height="6" viewBox="0 0 6 6"><path d="M1 4.500h4" stroke="#444" strokeWidth="1.200" /></svg>
            </QuickButton>
            <QuickButton $width={12} aria-label="Restore">
              <svg width="7" height="7" viewBox="0 0 7 7" fill="none" stroke="#444" strokeWidth=".8">
                <path d="M.5 2.500h4v4h-4zM2 2.500v-2h4.500v4h-2" />
              </svg>
            </QuickButton>
            <QuickButton $width={12} aria-label="Close">
              <svg width="6" height="6" viewBox="0 0 6 6"><path d="M.5.5l5 5M5.500.5l-5 5" stroke="#444" /></svg>
            </QuickButton>
          </WindowButtons>
        </TitleBar>

        <TabRow>
          <Tab $width={35} $kind="file">FILE</Tab>
          {TABS.map(([name, width]) => (
            <Tab key={name} $width={width}>{name}</Tab>
          ))}
          <Tab $width={60} $kind="active">TOOLPATHS</Tab>
          <HelpCorner>
            <QuickButton $width={11} aria-label="Help">
              <svg width="11" height="11" viewBox="0 0 11 11">
                <circle cx="5.500" cy="5.500" r="4.800" fill="#3c6fae" stroke="#9db8d8" />
                <path d="M4 4.200c0-2 3.200-2 3.200 0 0 1.200-1.600 1.200-1.600 2.600M5.600 7.800v1" fill="none" stroke="#fff" strokeWidth="1.100" />
              </svg>
            </QuickButton>
            <QuickButton $width={6} aria-label="Collapse ribbon">
              <svg width="6" height="5" viewBox="0 0 6 5"><path d="M1 4l2-2 2 2" fill="none" stroke="#444" strokeWidth="1.200" /></svg>
            </QuickButton>
          </HelpCorner>
        </TabRow>

        <Ribbon>
          <Group $width={215}>
            <Gallery $end>
              <GalleryButton $selected><RibbonIcon kind="face" />Face</GalleryButton>
              <GalleryScroller />
            </Gallery>
          </Group>
          {GALLERIES.map((g) => (
            <Group key={g.label} $width={g.width}>
              <Gallery>
                {g.items.map(([name, icon]) => (
                  <GalleryButton key={name}><RibbonIcon kind={icon} />{name}</GalleryButton>
                ))}
                <GalleryScroller />
              </Gallery>
              <GroupLabel>{g.label}</GroupLabel>
            </Group>
          ))}
          <Group $width={246}>
            <Tools>
              {TOOLS.map((tool) => (
                <ToolButton key={tool.top} $width={tool.width}>
                  <RibbonIcon kind={tool.icon} />
                  <ToolText>
                    <span>{tool.top}</span>
                    <MenuText>
                      {tool.bottom}
                      {tool.menu && <Caret />}
                    </MenuText>
                  </ToolText>
                </ToolButton>
              ))}
              <SmallTools>
                <SmallTool><SmallIcon kind="convert" />Convert to 5-axis</SmallTool>
                <SmallTool><SmallIcon kind="trim" />Trim</SmallTool>
                <SmallTool><SmallIcon kind="nest" />Nesting</SmallTool>
              </SmallTools>
            </Tools>
            <GroupLabel>Utilities</GroupLabel>
          </Group>
        </Ribbon>

        <Work>
          <SidePanel>
            <PanelTools>
              <svg width="154" height="10" viewBox="0 0 154 10" fill="none" strokeWidth="1.500">
                <path d="M2 3h6v5H2z" stroke="#b29a6c" />
                <path d="M14 5c3-3 5 3 9 0M30 3v6M34 3v6" stroke="#888" />
                <path d="M64 6h10M80 4h7v4h-7zM92 4l4 4 4-4" stroke="#d98b84" />
                <path d="M116 3l5 5M130 2h7v6M142 8l8-7" stroke="#c79a8a" />
              </svg>
            </PanelTools>
            <TreeBox>
              <Tree>
                {TREE.map((row, i) => (
                  <TreeRow key={i}>
                    {row.guides.map((kind, j) => (
                      <Guide key={j} $kind={kind}>
                        {EXPANDABLE.includes(kind) && <Expander aria-label="Collapse" />}
                      </Guide>
                    ))}
                    <TreeIcon kind={row.icon} />
                    <TreeLabel $selected={row.selected}>{row.label}</TreeLabel>
                  </TreeRow>
                ))}
              </Tree>
              <ScrollBar>
                <ScrollArrow aria-label="Scroll left">
                  <svg width="4" height="6" viewBox="0 0 4 6"><path d="M4 0v6L0 3z" fill="#444" /></svg>
                </ScrollArrow>
                <ScrollThumb />
                <ScrollArrow aria-label="Scroll right">
                  <svg width="4" height="6" viewBox="0 0 4 6"><path d="M0 0v6l4-3z" fill="#444" /></svg>
                </ScrollArrow>
              </ScrollBar>
            </TreeBox>
            <BottomTabs>
              <BottomTab $width={29}>Solids</BottomTab>
              <BottomTab $width={43} $active>Toolpaths</BottomTab>
              <BottomTab $width={28}>Levels</BottomTab>
              <BottomTab $width={30}>Planes</BottomTab>
            </BottomTabs>
          </SidePanel>

          <Stage>
            <Playback>
              <PlayGroup $gap={6}>
                {Object.keys(PLAYER_PATHS).map((kind) => (
                  <PushButton key={kind} aria-label={kind}><PlayerIcon kind={kind} /></PushButton>
                ))}
              </PlayGroup>
              <PlayGroup $gap={6}>
                <PushButton aria-label="Trace mode">
                  <svg width="11" height="11" viewBox="0 0 11 11" fill="none">
                    <path d="M1 8l4-5c2-2 3-1 2 1L4 8c0 2 2 1 3 0l3-5" stroke="#3c5f94" strokeWidth="1.100" />
                    <path d="M2 9l5-6" stroke="#c33" strokeWidth=".9" />
                  </svg>
                </PushButton>
                <PushButton $on aria-label="Run mode">
                  <svg width="11" height="11" viewBox="0 0 11 11">
                    <path d="M1 9l7-7" stroke="#888" />
                    <path d="M2 6l3-3" stroke="#c22" strokeWidth="2" />
                  </svg>
                </PushButton>
              </PlayGroup>
              <SpeedSlider type="range" aria-label="Speed" defaultValue={58} />
              <Timeline type="range" aria-label="Position" max={1000} defaultValue={709} />
              <PlayGroup $gap={0}>
                <PushButton aria-label="Conditional stop">
                  <svg width="11" height="11" viewBox="0 0 11 11">
                    <circle cx="5.500" cy="5.500" r="5" fill="#e04a1c" stroke="#7c2408" strokeWidth=".6" />
                    <path d="M5.500 1.500v8" stroke="#2a0c02" strokeWidth="1.800" />
                  </svg>
                </PushButton>
                <PushButton aria-label="Help"><QuestionIcon /></PushButton>
              </PlayGroup>
            </Playback>
            <Viewport>
              <Scene />
              <RemoteTab aria-label="Remote session">
                <svg width="16" height="36" viewBox="0 0 16 36">
                  <path d="M3 0h13v36L0 27V3z" fill="#55595e" />
                  <rect x="4" y="4" width="12" height="14" rx="2" fill="#174f8e" />
                  <circle cx="10" cy="11" r="4.500" fill="#c7d8ea" />
                  <path d="M6.500 11l3-2v4zM13.500 11l-3-2v4z" fill="#174f8e" />
                </svg>
              </RemoteTab>
            </Viewport>
            <BottomTabs>
              <BottomTab $width={53} $active>Viewsheet #1</BottomTab>
              <SheetArrows>
                <svg width="4" height="6" viewBox="0 0 4 6"><path d="M3.500.5v5L.5 3z" fill="none" stroke="#888" strokeWidth=".8" /></svg>
                <svg width="4" height="6" viewBox="0 0 4 6"><path d="M.5.5v5l3-2.500z" fill="none" stroke="#888" strokeWidth=".8" /></svg>
              </SheetArrows>
            </BottomTabs>
          </Stage>
        </Work>

        <StatusBar>
          <StatusGroup>
            <StatusCell $width={37}>X:-2.4500</StatusCell>
            <StatusCell $width={34}>Y:-4.3750</StatusCell>
            <StatusCell $width={34}>Z:0.2000</StatusCell>
          </StatusGroup>
          <StatusGroup>
            <StatusCell $width={12}>X:</StatusCell>
            <StatusCell $width={49}>-8.95803</StatusCell>
            <StatusCell $width={12}>Y:</StatusCell>
            <StatusCell $width={47}>-0.22430</StatusCell>
            <StatusCell $width={13}>Z:</StatusCell>
            <StatusCell $width={42}>0.00000</StatusCell>
            <StatusCell $width={19}>3D</StatusCell>
            <StatusCell $width={59}>CPLANE: TOP</StatusCell>
            <StatusCell $width={58}>TPLANE: TOP</StatusCell>
            <StatusCell $width={48}>WCS: TOP</StatusCell>
            <ShadeButton $narrow aria-label="Wireframe"><Globe full={2} /></ShadeButton>
            <ShadeButton $narrow aria-label="Dimmed hidden lines"><Globe full={1} /></ShadeButton>
            <ShadeButton $narrow aria-label="No hidden lines"><Globe full={0} /></ShadeButton>
            <ShadeButton aria-label="Outline shaded"><Ball /></ShadeButton>
            <ShadeButton $on aria-label="Shaded"><Ball /></ShadeButton>
            <ShadeButton aria-label="Material"><Ball half /></ShadeButton>
          </StatusGroup>
        </StatusBar>

        <Taskbar>
          <StartButton aria-label="Start">
            <svg width="26" height="24" viewBox="0 0 26 24">
              <defs>
                <radialGradient id="orb" cx=".5" cy=".8">
                  <stop offset="0" stopColor="#5fd0f5" />
                  <stop offset=".6" stopColor="#27699f" />
                  <stop offset="1" stopColor="#5c7f99" />
                </radialGradient>
              </defs>
              <circle cx="13" cy="13" r="12" fill="url(#orb)" />
              <path d="M7 8c2-1 4-1 5.500 0l-1 4.500C9.500 11.500 8 11.500 6 12.500z" fill="#e8642a" />
              <path d="M13.500 8.500c2 1 4 1 6 0l-1 4.500c-2 1-4 1-6 0z" fill="#9ccc3c" />
              <path d="M5.800 13.500c2-1 4-1 5.500 0l-1 4.500c-2-1-3.500-1-5.500 0z" fill="#3ca0e4" />
              <path d="M12.200 14c2 1 4 1 6 0l-1 4.500c-2 1-4 1-6 0z" fill="#f8cc3a" />
            </svg>
          </StartButton>
          <TaskButton $width={39} aria-label="Notepad">
            <svg width="18" height="22" viewBox="0 0 18 22">
              <path d="M1 1h16v20H1z" fill="#bfe0f4" />
              <path d="M3 4h7v5H3z" fill="#3a86c8" />
              <path d="M11 5h4M11 8h4M3 12h5M10 12h5M3 15h5M10 15h5M3 18h12" stroke="#5b91bb" />
              <path d="M10 13h5v5h-5z" fill="#dcb75c" />
            </svg>
          </TaskButton>
          <TaskButton $width={41} $look="plain" aria-label="Meeting">
            <svg width="20" height="20" viewBox="0 0 20 20" fill="#f8b24a">
              <path d="M0 0h20v20H0z" fill="#0e1440" />
              <circle cx="10" cy="3.500" r="2.600" />
              <circle cx="10" cy="16.500" r="2.600" />
              <circle cx="4" cy="6.500" r="2.600" />
              <circle cx="16" cy="6.500" r="2.600" />
              <circle cx="4" cy="13.500" r="2.600" />
              <circle cx="16" cy="13.500" r="2.600" />
              <path d="M10 3v14M4 6.500l12 7M16 6.500l-12 7" stroke="#f8b24a" strokeWidth="2" />
              <circle cx="10" cy="10" r="3" />
            </svg>
          </TaskButton>
          <TaskButton $width={36} $look="active" $gap={5} aria-label="Mastercam 2017">
            <svg width="26" height="23" viewBox="0 0 26 23">
              <path d="M4 13L9 2h4l1 6 5-6h4l-3 12h-4l2-7-5 7h-3l-1-6-2 5z" fill="#c51f3c" />
              <path d="M2 6h7V4l4 4-4 4v-2H2z" fill="#fff" />
              <text x="6" y="21" fontSize="7" fontWeight="700" fontStyle="italic" fill="#111">2017</text>
            </svg>
          </TaskButton>
          <TaskButton $width={39} $gap={2} aria-label="Launcher">
            <svg width="22" height="22" viewBox="0 0 22 22">
              <rect x="1" y="1" width="20" height="20" rx="1" fill="#176db4" />
              <path d="M1 11h8V7l6 6-6 6v-4H1z" fill="#fff" />
              <text x="11" y="11" fontSize="8" fontWeight="700" fill="#fff">17</text>
            </svg>
          </TaskButton>
          <TaskButton $width={38} aria-label="Explorer">
            <svg width="22" height="20" viewBox="0 0 22 20">
              <path d="M2 2h7l1 2h10v14H2z" fill="#d9ae4e" />
              <path d="M4 3h4v4H4zM12 2h6v4h-6z" fill="#7fb878" />
              <path d="M1 7h20v11H1z" fill="#f5df97" />
              <path d="M6 19v-5h10v5h-2v-3H8v3z" fill="#6caedb" />
            </svg>
          </TaskButton>
          <Tray>
            <TrayIcons />
            <Clock>2:12 PM<br />8/5/2018</Clock>
            <ShowDesktop aria-label="Show desktop" />
          </Tray>
        </Taskbar>

        <Dialog role="dialog" aria-label="Backplot">
          <DialogTitle>
            <span>ot</span>
            <CloseButton aria-label="Close">
              <svg width="8" height="7" viewBox="0 0 8 7">
                <path d="M1 1l6 5M7 1L1 6" stroke="#444" strokeWidth="2.200" />
                <path d="M1 1l6 5M7 1L1 6" stroke="#fff" strokeWidth=".8" />
              </svg>
            </CloseButton>
          </DialogTitle>
          <DialogBody>
            <DialogRow $top={20} $gap={1}>
              <PushButton $width={12} $height={16} aria-label="Tool"><DialogIcon kind="Tool" /></PushButton>
              <PushButton $width={16} $height={16} $on aria-label="Holder"><DialogIcon kind="Holder" /></PushButton>
              <PushButton $width={16} $height={16} aria-label="Point"><DialogIcon kind="Point" /></PushButton>
              <PushButton $width={16} $height={16} aria-label="Stock"><DialogIcon kind="Stock" /></PushButton>
              <Spacer />
              <PushButton $width={16} $height={16} aria-label="Options"><DialogIcon kind="Options" /></PushButton>
            </DialogRow>
            <DialogRow $top={1} $gap={3} $right={3}>
              <PushButton $width={16} $height={16} aria-label="Trace"><DialogIcon kind="Trace" /></PushButton>
              <PushButton $width={16} $height={16} aria-label="Hatch"><DialogIcon kind="Hatch" /></PushButton>
              <PushButton $width={16} $height={16} aria-label="Snapshot"><DialogIcon kind="Snapshot" /></PushButton>
              <PushButton $width={16} $height={16} aria-label="Save geometry"><SaveIcon color="#259a63" /></PushButton>
            </DialogRow>
            <DialogRow $top={9} $gap={3} $right={3}>
              <PushButton $width={35} $height={18} aria-label="OK">
                <svg width="14" height="14" viewBox="0 0 14 14">
                  <path d="M1 8l3-1.500L6 9.500 11 1l2 .5L6.500 13z" fill="#3cc02c" stroke="#1d7a16" strokeWidth=".7" />
                </svg>
              </PushButton>
              <PushButton $width={35} $height={18} aria-label="Help"><QuestionIcon size={14} /></PushButton>
            </DialogRow>
          </DialogBody>
        </Dialog>

        <FloatBar>
          <svg width="9" height="11" viewBox="0 0 9 11"><path d="M1 0v11M3 0v11M5 0v11M7 0v11M0 2h9M0 5h9M0 8h9" stroke="#bbb" strokeWidth=".7" /></svg>
          <svg width="8" height="8" viewBox="0 0 8 8"><path d="M1 1l2 2M7 1L5 3M1 7l2-2M7 7L5 5M3 1v2H1M5 1v2h2M3 7V5H1M5 7V5h2" stroke="#666" strokeWidth=".7" fill="none" /></svg>
          <svg width="7" height="4" viewBox="0 0 7 4"><path d="M0 2h7" stroke="#444" strokeWidth="1.500" /></svg>
          <svg width="9" height="6" viewBox="0 0 9 6"><path d="M.5 1l4 4 4-4" fill="none" stroke="#444" strokeWidth="1.300" /></svg>
        </FloatBar>

        <Pointer width="9" height="13" viewBox="0 0 9 13">
          <path d="M.7.700v10l2.300-2 1.500 3.500 1.500-.7L4.500 8.300h3.200z" fill="#fff" stroke="#222" strokeWidth=".8" />
        </Pointer>
      </Window>
    </ThemeProvider>
  );
}
